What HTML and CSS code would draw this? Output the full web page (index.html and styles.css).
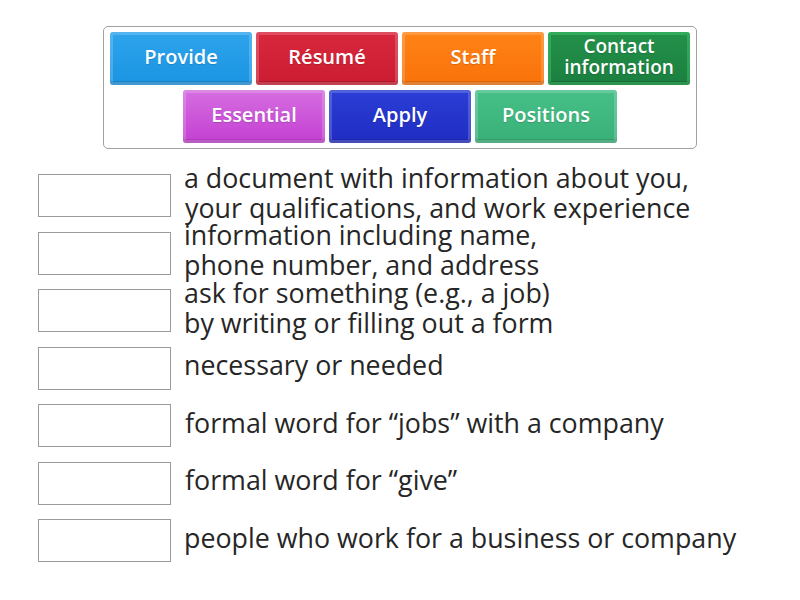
FILE: index.html
```html
<!DOCTYPE html>
<html>
<head>
<meta charset="utf-8">
<link rel="stylesheet" href="styles.css">
</head>
<body>
<div class="bank">
  <div class="row">
    <div class="tile blue">Provide</div>
    <div class="tile red">Résumé</div>
    <div class="tile orange">Staff</div>
    <div class="tile green small">Contact<br>information</div>
  </div>
  <div class="row">
    <div class="tile purple">Essential</div>
    <div class="tile navy">Apply</div>
    <div class="tile mint">Positions</div>
  </div>
</div>
<div class="items">
  <div class="item"><div class="box"></div><div class="def">a document with information about you,<br><span class="ind">your qualifications, and work experience</span></div></div>
  <div class="item"><div class="box"></div><div class="def">information including name,<br>phone number, and address</div></div>
  <div class="item"><div class="box"></div><div class="def">ask for something (e.g., a job)<br>by writing or filling out a form</div></div>
  <div class="item"><div class="box"></div><div class="def">necessary or needed</div></div>
  <div class="item"><div class="box"></div><div class="def sp">formal word for “jobs” with a company</div></div>
  <div class="item"><div class="box"></div><div class="def sp">formal word for “give”</div></div>
  <div class="item"><div class="box"></div><div class="def">people who work for a business or company</div></div>
</div>
</body>
</html>
```

FILE: styles.css
```css
* { box-sizing: border-box; }
body {
  margin: 0;
  background: #fff;
  font-family: "Open Sans", "Liberation Sans", sans-serif;
  color: #222;
}
.bank {
  width: 594px;
  margin: 26px auto 0;
  border: 1px solid #a0a0a0;
  border-radius: 5px;
  padding: 5px 4px 5px;
  display: flex;
  flex-direction: column;
  gap: 5px;
}
.row {
  display: flex;
  justify-content: center;
  gap: 4px;
}
.tile {
  width: 142px;
  height: 53px;
  border-radius: 3px;
  color: #fff;
  font-weight: 600;
  font-size: 20px;
  display: flex;
  align-items: center;
  justify-content: center;
  text-align: center;
  line-height: 22px;
  padding-bottom: 4px;
  box-shadow: inset 0 0 0 3px rgba(255,255,255,0.18), inset 0 -4px 0 rgba(0,0,0,0.12);
  text-shadow: 0 1px 1px rgba(0,0,0,0.15);
}
.tile.small { font-size: 19px; line-height: 21px; }
.blue { background: linear-gradient(#2ea4ec, #1a94e2); }
.red { background: linear-gradient(#d8283e, #cb1c31); }
.orange { background: linear-gradient(#ff8316, #f9720a); }
.green { background: linear-gradient(#23914a, #1b7f3f); box-shadow: inset 0 0 0 3px rgba(80,220,120,0.35), inset 0 -4px 0 rgba(0,0,0,0.12); }
.purple { background: linear-gradient(#d56ee0, #c43fd2); }
.navy { background: linear-gradient(#2b3ed6, #1f2cc2); }
.mint { background: linear-gradient(#47c088, #38b077); }
.items {
  margin-top: 25px;
  padding-left: 38px;
  display: flex;
  flex-direction: column;
  gap: 14.5px;
}
.item {
  display: flex;
  align-items: center;
  height: 43px;
}
.box {
  width: 133px;
  height: 43px;
  border: 1px solid #9a9a9a;
  flex: none;
}
.def {
  margin-left: 13px;
  margin-bottom: 6px;
  font-size: 26.8px;
  line-height: 30px;
  white-space: nowrap;
  color: #262626;
}
.ind { padding-left: 1px; }
.def.sp { margin-left: 14px; }
```
